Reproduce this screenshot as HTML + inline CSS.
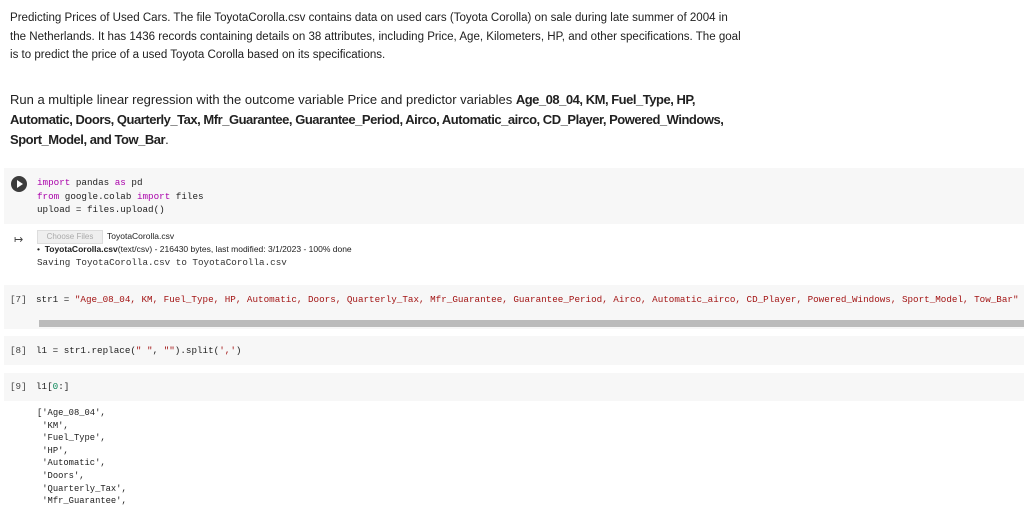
<!DOCTYPE html>
<html><head><style>
body{margin:0;width:1024px;height:510px;background:#fff;position:relative;overflow:hidden;font-family:"Liberation Sans",sans-serif;color:#212121}
.a{position:absolute;white-space:pre}
.m{font-family:"Liberation Mono",monospace;font-size:9.25px;color:#212121}
.cell{position:absolute;left:4px;right:0;background:#f7f7f7}
.k{color:#a0a}.s{color:#a31515}.n{color:#098658}
.p1{left:10px;font-size:11.55px;color:#212121}
.p2{left:10px;font-size:13px;color:#212121}
b{font-weight:bold;letter-spacing:-0.48px}
</style></head><body>
<div class="a p1" style="top:12px">Predicting Prices of Used Cars. The file ToyotaCorolla.csv contains data on used cars (Toyota Corolla) on sale during late summer of 2004 in</div>
<div class="a p1" style="top:31px">the Netherlands. It has 1436 records containing details on 38 attributes, including Price, Age, Kilometers, HP, and other specifications. The goal</div>
<div class="a p1" style="top:49px">is to predict the price of a used Toyota Corolla based on its specifications.</div>
<div class="a p2" style="top:92px">Run a multiple linear regression with the outcome variable Price and predictor variables <b>Age_08_04, KM, Fuel_Type, HP,</b></div>
<div class="a p2" style="top:112px"><b>Automatic, Doors, Quarterly_Tax, Mfr_Guarantee, Guarantee_Period, Airco, Automatic_airco, CD_Player, Powered_Windows,</b></div>
<div class="a p2" style="top:132px"><b>Sport_Model, and Tow_Bar</b>.</div>

<div class="cell" style="top:168px;height:56px"></div>
<div class="a" style="left:11px;top:176px;width:16px;height:16px;border-radius:50%;background:#3c3c3c"></div>
<div class="a" style="left:17px;top:180px;width:0;height:0;border-left:6px solid #fff;border-top:4px solid transparent;border-bottom:4px solid transparent"></div>
<div class="a m" style="left:37px;top:176px;line-height:13.5px"><span class="k">import</span> pandas <span class="k">as</span> pd
<span class="k">from</span> google.colab <span class="k">import</span> files
upload = files.upload()</div>

<div class="a" style="left:14px;top:233px;font-size:11px;color:#444">&#x21a6;</div>
<div class="a" style="left:37px;top:230px;width:64px;height:12px;background:#efefef;border:1px solid #ddd;font-size:8px;color:#aaa;text-align:center;line-height:12px">Choose Files</div>
<div class="a" style="left:107px;top:231px;font-size:8.5px">ToyotaCorolla.csv</div>
<div class="a" style="left:37px;top:244px;font-size:8.5px">•&nbsp; <b style="letter-spacing:0">ToyotaCorolla.csv</b>(text/csv) - 216430 bytes, last modified: 3/1/2023 - 100% done</div>
<div class="a m" style="left:37px;top:257px;color:#333">Saving ToyotaCorolla.csv to ToyotaCorolla.csv</div>

<div class="cell" style="top:285px;height:44px"></div>
<div class="a" style="left:39px;top:320px;right:0;height:7px;background:#bbb"></div>
<div class="a m" style="left:10px;top:294px;color:#444">[7]</div>
<div class="a m" style="left:36px;top:294px">str1 = <span class="s">"Age_08_04, KM, Fuel_Type, HP, Automatic, Doors, Quarterly_Tax, Mfr_Guarantee, Guarantee_Period, Airco, Automatic_airco, CD_Player, Powered_Windows, Sport_Model, Tow_Bar"</span></div>

<div class="cell" style="top:336px;height:29px"></div>
<div class="a m" style="left:10px;top:345px;color:#444">[8]</div>
<div class="a m" style="left:36px;top:345px">l1 = str1.replace(<span class="s">" "</span>, <span class="s">""</span>).split(<span class="s">','</span>)</div>

<div class="cell" style="top:373px;height:28px"></div>
<div class="a m" style="left:10px;top:381px;color:#444">[9]</div>
<div class="a m" style="left:36px;top:381px">l1[<span class="n">0</span>:]</div>

<div class="a m" style="left:37px;top:407px;line-height:12.6px;font-size:8.8px">['Age_08_04',
 'KM',
 'Fuel_Type',
 'HP',
 'Automatic',
 'Doors',
 'Quarterly_Tax',
 'Mfr_Guarantee',</div>
</body></html>
